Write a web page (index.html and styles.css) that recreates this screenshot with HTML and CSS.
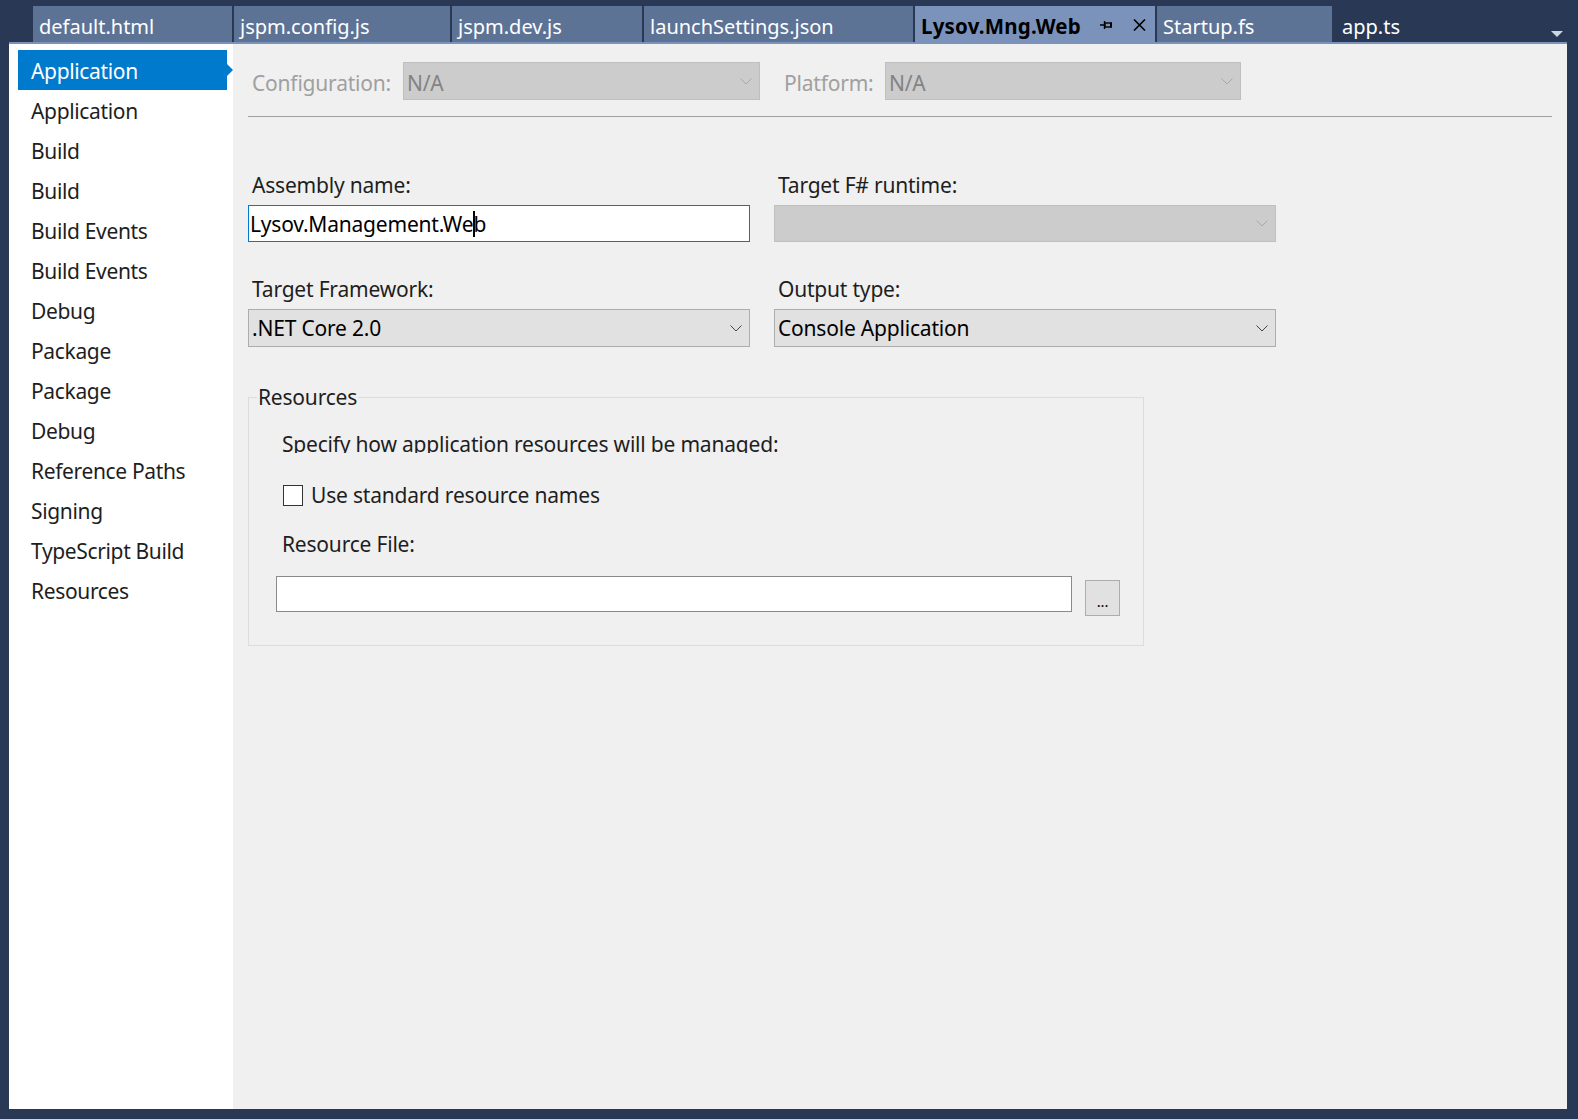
FILE: index.html
```html
<!DOCTYPE html>
<html>
<head>
<meta charset="utf-8">
<title>Lysov.Mng.Web</title>
<link rel="stylesheet" href="styles.css">
</head>
<body>
<div class="window">
  <div class="tabstrip">
    <div class="tab tab-1">default.html</div>
    <div class="tab tab-2">jspm.config.js</div>
    <div class="tab tab-3">jspm.dev.js</div>
    <div class="tab tab-4">launchSettings.json</div>
    <div class="tab tab-5 active">
      <span class="tab-title">Lysov.Mng.Web</span>
      <svg class="pin" width="12" height="8" viewBox="0 0 12 8"><path d="M0 4H4.5M4.5 0V8" stroke="#000" stroke-width="1.4" fill="none"/><rect x="5" y="2" width="6" height="4" fill="none" stroke="#000" stroke-width="1.4"/><path d="M11 1.5V6.5" stroke="#000" stroke-width="2"/></svg>
      <svg class="close" width="13" height="12" viewBox="0 0 13 12"><path d="M1 0.5L12 11.5M12 0.5L1 11.5" stroke="#000" stroke-width="1.6" fill="none"/></svg>
    </div>
    <div class="tab tab-6">Startup.fs</div>
    <div class="tab plain">app.ts</div>
    <div class="tab-spacer"></div>
    <svg class="tab-menu" width="12" height="6" viewBox="0 0 12 6"><path d="M0 0H12L6 6Z" fill="#cdd5e3"/></svg>
  </div>
  <div class="tabline"></div>
  <div class="panel">
    <nav class="sidebar">
      <div class="nav-item selected">Application</div>
      <div class="nav-item">Application</div>
      <div class="nav-item">Build</div>
      <div class="nav-item">Build</div>
      <div class="nav-item">Build Events</div>
      <div class="nav-item">Build Events</div>
      <div class="nav-item">Debug</div>
      <div class="nav-item">Package</div>
      <div class="nav-item">Package</div>
      <div class="nav-item">Debug</div>
      <div class="nav-item">Reference Paths</div>
      <div class="nav-item">Signing</div>
      <div class="nav-item">TypeScript Build</div>
      <div class="nav-item">Resources</div>
    </nav>
    <main class="content">
      <div class="config-row">
        <span class="config-label">Configuration:</span>
        <div class="combo disabled config-combo">
          <span class="combo-text">N/A</span>
          <svg class="chev" width="12" height="7" viewBox="0 0 12 7"><path d="M0.5 0.5L6 6L11.5 0.5" fill="none" stroke="#a8a8a8" stroke-width="1"/></svg>
        </div>
        <span class="config-label platform-label">Platform:</span>
        <div class="combo disabled platform-combo">
          <span class="combo-text">N/A</span>
          <svg class="chev" width="12" height="7" viewBox="0 0 12 7"><path d="M0.5 0.5L6 6L11.5 0.5" fill="none" stroke="#a8a8a8" stroke-width="1"/></svg>
        </div>
      </div>
      <div class="separator"></div>

      <div class="form-grid">
        <div class="field">
          <div class="field-label">Assembly name:</div>
          <div class="textbox focused"><span>Lysov.Management.We</span><span class="caret"></span><span>b</span></div>
        </div>
        <div class="field">
          <div class="field-label">Target F# runtime:</div>
          <div class="combo disabled">
            <span></span>
            <svg class="chev" width="12" height="7" viewBox="0 0 12 7"><path d="M0.5 0.5L6 6L11.5 0.5" fill="none" stroke="#a8a8a8" stroke-width="1"/></svg>
          </div>
        </div>
        <div class="field">
          <div class="field-label">Target Framework:</div>
          <div class="combo tall">
            <span>.NET Core 2.0</span>
            <svg class="chev" width="12" height="7" viewBox="0 0 12 7"><path d="M0.5 0.5L6 6L11.5 0.5" fill="none" stroke="#444" stroke-width="1"/></svg>
          </div>
        </div>
        <div class="field">
          <div class="field-label">Output type:</div>
          <div class="combo tall">
            <span>Console Application</span>
            <svg class="chev" width="12" height="7" viewBox="0 0 12 7"><path d="M0.5 0.5L6 6L11.5 0.5" fill="none" stroke="#444" stroke-width="1"/></svg>
          </div>
        </div>
      </div>

      <fieldset class="group">
        <legend class="group-title">Resources</legend>
        <div class="group-body">
          <div class="clip-line"><span>Specify how application resources will be managed:</span></div>
          <label class="check-row"><span class="checkbox"></span><span>Use standard resource names</span></label>
          <div class="group-label">Resource File:</div>
          <div class="file-row">
            <div class="textbox file-box"></div>
            <div class="browse-btn">...</div>
          </div>
        </div>
      </fieldset>
    </main>
  </div>
</div>
</body>
</html>
```

FILE: styles.css
```css
html, body {
  margin: 0;
  padding: 0;
}
body {
  background: #293955;
  font-family: "Noto Sans", "Open Sans", sans-serif;
  width: 1578px;
  height: 1119px;
  overflow: hidden;
}
.window {
  display: flex;
  flex-direction: column;
  height: 1119px;
  box-sizing: border-box;
  padding: 6px 11px 10px 9px;
}

/* tabs */
.tabstrip {
  display: flex;
  height: 36px;
  padding-left: 24px;
  gap: 2px;
}
.tab {
  display: flex;
  align-items: center;
  box-sizing: border-box;
  padding-left: 6px;
  padding-top: 4px;
  background: #5d7396;
  color: #ffffff;
  font-size: 20px;
  white-space: nowrap;
  overflow: hidden;
}
.tab-1 { width: 199px; }
.tab-2 { width: 216px; }
.tab-3 { width: 190px; }
.tab-4 { width: 269px; }
.tab-5 { width: 240px; }
.tab-6 { width: 175px; }
.tab.active {
  background: #7b93bb;
  color: #000;
  font-weight: bold;
  font-size: 20.5px;
  letter-spacing: 0.2px;
}
.tab.active .pin {
  margin-left: auto;
  margin-right: 21px;
  margin-top: -3px;
}
.tab.active .close {
  margin-right: 9px;
  margin-top: -3px;
}
.tab.plain {
  background: transparent;
  padding-left: 8px;
}
.tab-spacer {
  flex: 1;
}
.tab-menu {
  align-self: flex-end;
  margin-bottom: 5px;
  margin-right: 4px;
}
.tabline {
  height: 2px;
  background: #7b93bb;
}

/* panel */
.panel {
  flex: 1;
  display: flex;
  background: #f0f0f0;
}
.sidebar {
  width: 224px;
  flex: 0 0 224px;
  background: #ffffff;
  padding-top: 6px;
}
.nav-item {
  height: 40px;
  line-height: 42px;
  padding-left: 22px;
  font-size: 21px;
  letter-spacing: -0.35px;
  color: #1e1e1e;
  box-sizing: border-box;
}
.nav-item.selected {
  position: relative;
  margin-left: 9px;
  width: 209px;
  padding-left: 13px;
  background: #007acc;
  color: #ffffff;
}
.nav-item.selected::after {
  content: "";
  position: absolute;
  right: -6px;
  top: 14px;
  border-left: 6px solid #007acc;
  border-top: 6px solid transparent;
  border-bottom: 6px solid transparent;
}

.content {
  flex: 1;
  padding: 18px 15px 0 15px;
  color: #1e1e1e;
  font-size: 21px;
  letter-spacing: -0.2px;
}

.config-row {
  display: flex;
  align-items: center;
  height: 38px;
}
.config-label {
  color: #a0a0a0;
  margin-left: 4px;
  width: 151px;
  padding-top: 3px;
}
.platform-label {
  margin-left: 24px;
  width: 101px;
}
.config-combo { width: 357px; }
.platform-combo { width: 356px; }
.combo-text {
  padding-top: 3px;
}

.combo {
  height: 37px;
  box-sizing: border-box;
  border: 1px solid #adadad;
  background: #e1e1e1;
  display: flex;
  align-items: center;
  padding-left: 3px;
  color: #000;
}
.combo.tall { height: 38px; }
.config-row .combo { height: 38px; }
.combo.disabled {
  background: #cccccc;
  border-color: #bfbfbf;
  color: #838383;
}
.combo .chev {
  margin-left: auto;
  margin-right: 7px;
}

.separator {
  margin-top: 16px;
  height: 1px;
  background: #a0a0a0;
}

.form-grid {
  margin-top: 55px;
  display: grid;
  grid-template-columns: 502px 502px;
  column-gap: 24px;
  row-gap: 34px;
}
.field-label {
  height: 26px;
  line-height: 26px;
  padding-left: 4px;
  margin-bottom: 7px;
  color: #1e1e1e;
}
.textbox {
  height: 37px;
  box-sizing: border-box;
  border: 1px solid #8a8a8a;
  background: #ffffff;
  display: flex;
  align-items: center;
  padding-left: 1px;
  color: #000;
}
.textbox.focused {
  border-color: #0078d7;
}
.caret {
  display: inline-block;
  width: 2px;
  height: 26px;
  background: #000;
  margin-right: -2px;
  position: relative;
  z-index: 1;
}

/* group box */
.group {
  margin: 37px 0 0 0;
  width: 896px;
  box-sizing: border-box;
  border: 1px solid #dcdcdc;
  padding: 0 0 29px 8px;
}
.group-title {
  padding: 0 1px;
  line-height: 26px;
  color: #1e1e1e;
}
.group-body {
  padding-left: 19px;
}
.clip-line {
  margin-top: 21px;
  height: 22px;
  line-height: 26px;
  overflow: hidden;
  padding-left: 6px;
  color: #1e1e1e;
}
.check-row {
  display: flex;
  align-items: center;
  height: 26px;
  margin-top: 29px;
  padding-left: 7px;
  color: #1e1e1e;
}
.checkbox {
  width: 18px;
  height: 19px;
  border: 1px solid #333333;
  background: #ffffff;
  margin-right: 8px;
}
.group-label {
  margin-top: 23px;
  height: 26px;
  line-height: 26px;
  padding-left: 6px;
  color: #1e1e1e;
}
.file-row {
  margin-top: 19px;
  display: flex;
  align-items: flex-start;
}
.file-box {
  width: 796px;
  height: 36px;
}
.browse-btn {
  margin-left: 13px;
  margin-top: 4px;
  width: 35px;
  height: 36px;
  box-sizing: border-box;
  border: 1px solid #adadad;
  background: #e1e1e1;
  font-size: 15px;
  text-align: center;
  line-height: 40px;
  color: #000;
}
```
